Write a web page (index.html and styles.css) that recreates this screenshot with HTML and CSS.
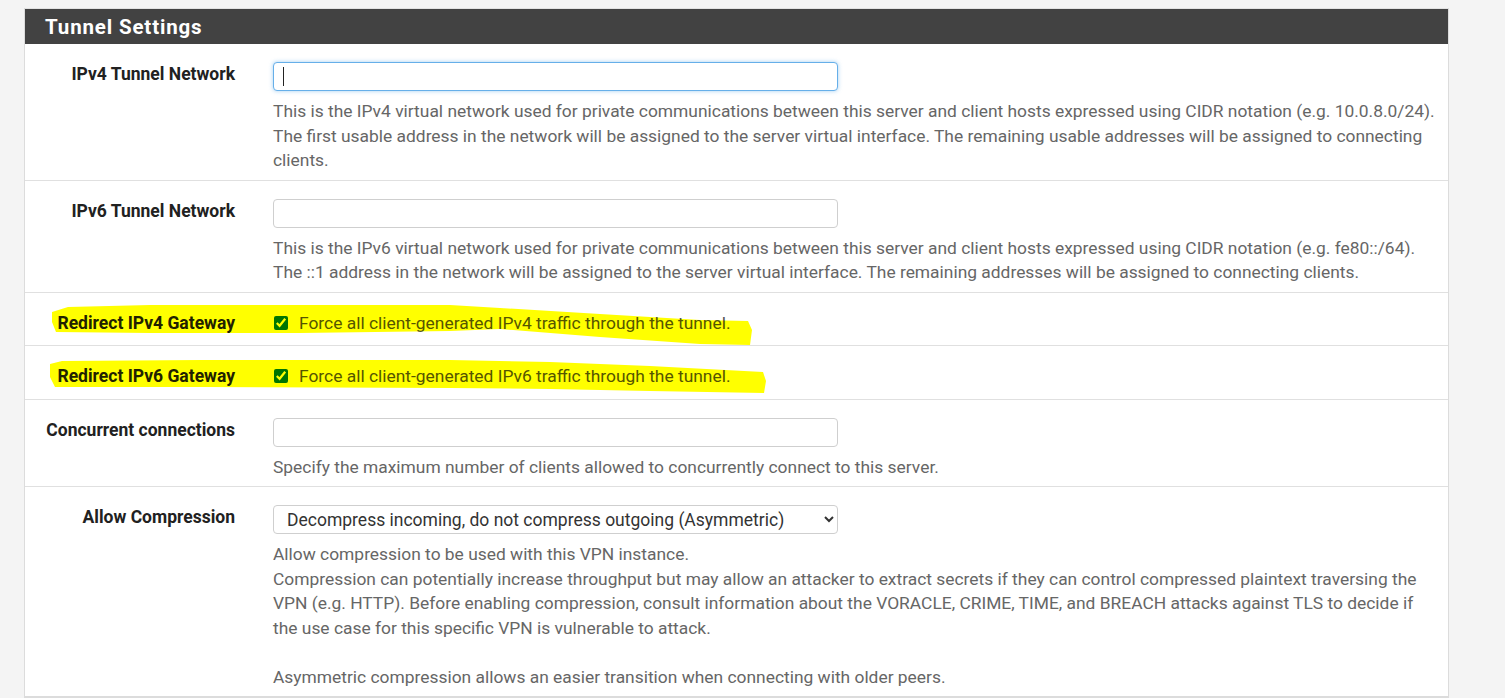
FILE: index.html
```html
<!DOCTYPE html>
<html lang="en">
<head>
    <meta charset="UTF-8">
    <title>OpenVPN - Tunnel Settings</title>
    <link rel="stylesheet" href="styles.css">
</head>
<body>

<div class="page">
    <div class="panel">
        <div class="panel-heading">
            <h2 class="panel-title">Tunnel Settings</h2>
        </div>

        <div class="panel-body">
            <div class="form-group">
                <label class="col-label" for="tunnel-net">IPv4 Tunnel Network</label>
                <div class="col-field">
                    <input class="form-control is-focused" type="text" id="tunnel-net" autofocus>
                    <span class="help-block">This is the IPv4 virtual network used for private communications between this server and client hosts expressed using CIDR notation (e.g. 10.0.8.0/24). The first usable address in the network will be assigned to the server virtual interface. The remaining usable addresses will be assigned to connecting clients.</span>
                </div>
            </div>

            <div class="form-group">
                <label class="col-label" for="tunnel-net6">IPv6 Tunnel Network</label>
                <div class="col-field">
                    <input class="form-control" type="text" id="tunnel-net6">
                    <span class="help-block">This is the IPv6 virtual network used for private communications between this server and client hosts expressed using CIDR notation (e.g. fe80::/64). The ::1 address in the network will be assigned to the server virtual interface. The remaining addresses will be assigned to connecting clients.</span>
                </div>
            </div>

            <div class="form-group check-row">
                <span class="col-label">Redirect IPv4 Gateway</span>
                <div class="col-field">
                    <label class="checkbox"><input type="checkbox" checked> Force all client-generated IPv4 traffic through the tunnel.</label>
                </div>
            </div>

            <div class="form-group check-row">
                <span class="col-label">Redirect IPv6 Gateway</span>
                <div class="col-field">
                    <label class="checkbox"><input type="checkbox" checked> Force all client-generated IPv6 traffic through the tunnel.</label>
                </div>
            </div>

            <div class="form-group">
                <label class="col-label" for="maxclients">Concurrent connections</label>
                <div class="col-field">
                    <input class="form-control" type="text" id="maxclients">
                    <span class="help-block">Specify the maximum number of clients allowed to concurrently connect to this server.</span>
                </div>
            </div>

            <div class="form-group">
                <label class="col-label" for="compression">Allow Compression</label>
                <div class="col-field">
                    <select class="form-control" id="compression">
                        <option>Decompress incoming, do not compress outgoing (Asymmetric)</option>
                        <option>Refuse any non-stub compression (Most secure)</option>
                        <option>Compress and decompress</option>
                    </select>
                    <span class="help-block">Allow compression to be used with this VPN instance.<br>Compression can potentially increase throughput but may allow an attacker to extract secrets if they can control compressed plaintext traversing the VPN (e.g. HTTP). Before enabling compression, consult information about the VORACLE, CRIME, TIME, and BREACH attacks against TLS to decide if the use case for this specific VPN is vulnerable to attack.<br><br>Asymmetric compression allows an easier transition when connecting with older peers.</span>
                </div>
            </div>
        </div>
    </div>

    <!-- highlighter marks drawn over the screenshot -->
    <svg class="highlights" width="1505" height="698" viewBox="0 0 1505 698">
        <path d="M52 312 L68 307 L150 305 L450 305 L500 308 L600 314 L700 320 L748 321 L752 330 L750 345 L700 344 L600 337 L500 329 L450 331 L300 333 L150 333 L56 332 L52 322 Z"/>
        <path d="M50 364 L62 361 L200 360 L450 360 L550 362 L650 366 L763 372 L766 381 L764 393 L650 391 L550 389 L450 388 L200 387 L55 387 L50 377 Z"/>
    </svg>
</div>

</body>
</html>
```

FILE: styles.css
```css
body {
    margin: 0;
    padding: 0;
    background-color: #f4f4f4;
    font-family: Roboto, "Liberation Sans", sans-serif;
    font-size: 17.4px;
    color: #212121;
}

.page {
    position: relative;
    padding: 8px 0 0 24px;
}

.panel {
    width: 1423px;
    background: white;
    border: 1px solid #dcdcdc;
    border-top: none;
}

.panel-heading {
    background: #424242;
    height: 35px;
    padding: 0 20px;
    display: flex;
    align-items: center;
    border-top: 1px solid #e2e2e2;
}
.panel-title {
    margin: 0;
    color: white;
    font-size: 20.5px;
    font-weight: bold;
    letter-spacing: 0.85px;
}

.form-group {
    display: grid;
    grid-template-columns: 248px 1fr;
    padding: 18px 7px 7px 0;
    border-bottom: 1px solid #e0e0e0;
    line-height: 24.5px;
}
.form-group:last-child {
    border-bottom: 1px solid #dcdcdc;
}
.check-row {
    padding-bottom: 10px;
}

.col-label {
    text-align: right;
    padding-right: 38px;
    font-size: 17.5px;
    font-weight: bold;
    color: #212121;
}

.col-field {
    display: flex;
    flex-direction: column;
    align-items: flex-start;
}

.form-control {
    box-sizing: border-box;
    width: 565px;
    height: 29px;
    border: 1px solid #cfcfcf;
    border-radius: 4px;
    padding: 2px 10px;
    font-family: inherit;
    font-size: 17.5px;
    color: #333;
    background: white;
    outline: none;
}
.form-control.is-focused,
.form-control:focus {
    border-color: #66afe9;
    box-shadow: 0 0 4px rgba(102, 175, 233, 0.6);
}
/* text caret of the focused field */
.form-control.is-focused {
    background: white linear-gradient(#222, #222) no-repeat 9px 4px / 1px 19px;
    caret-color: transparent;
}
select.form-control {
    padding: 0 6px 0 9px;
    color: #333;
}

.help-block {
    display: block;
    margin-top: 8px;
    color: #666;
}

.checkbox {
    display: flex;
    align-items: center;
    color: #555;
}
.checkbox input {
    width: 14px;
    height: 14px;
    margin: 0 11px 0 1px;
}

.highlights {
    position: absolute;
    top: 0;
    left: 0;
    pointer-events: none;
    mix-blend-mode: multiply;
}
.highlights path {
    fill: #ffff00;
}
```
